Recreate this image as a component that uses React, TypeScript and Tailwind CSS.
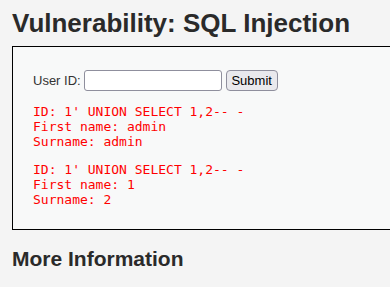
export default function App() {
  const results = [
    { id: "1' UNION SELECT 1,2-- -", first: 'admin', last: 'admin' },
    { id: "1' UNION SELECT 1,2-- -", first: '1', last: '2' },
  ];

  return (
    <div className="h-[287px] overflow-hidden bg-[#f4f4f4] px-3 font-['Liberation_Sans',Arial,sans-serif] text-[#222]">
      <h1 className="h-[46px] pt-[5px] text-[26px] leading-[36px] font-bold text-[#2a2a2a]">
        Vulnerability: SQL Injection
      </h1>

      <div className="w-[420px] border border-black bg-[#f8f9f9] pt-[23px] pb-[22px] pl-5">
        <form className="flex h-[21px] items-center text-[13px] text-[#333]" onSubmit={(e) => e.preventDefault()}>
          <label className="mr-[3px]">User ID:</label>
          <input
            type="text"
            className="h-[21px] w-[138px] rounded-[3px] border border-[#8f8f9d] bg-white px-1 text-[13px]"
          />
          <button
            type="submit"
            className="ml-[4px] h-[21px] w-[52px] rounded-[4px] border border-[#8f8f9d] bg-[#e9e9ed] text-[13px] text-black"
          >
            Submit
          </button>
        </form>

        {results.map((r, i) => (
          <pre
            key={i}
            className="mt-[13px] font-['DejaVu_Sans_Mono',monospace] text-[13px] leading-[15px] text-[#ff0000]"
          >
            {`ID: ${r.id}\nFirst name: ${r.first}\nSurname: ${r.last}`}
          </pre>
        ))}
      </div>

      <h2 className="mt-[16px] text-[21px] leading-[26px] font-bold text-[#2a2a2a]">More Information</h2>
    </div>
  );
}
